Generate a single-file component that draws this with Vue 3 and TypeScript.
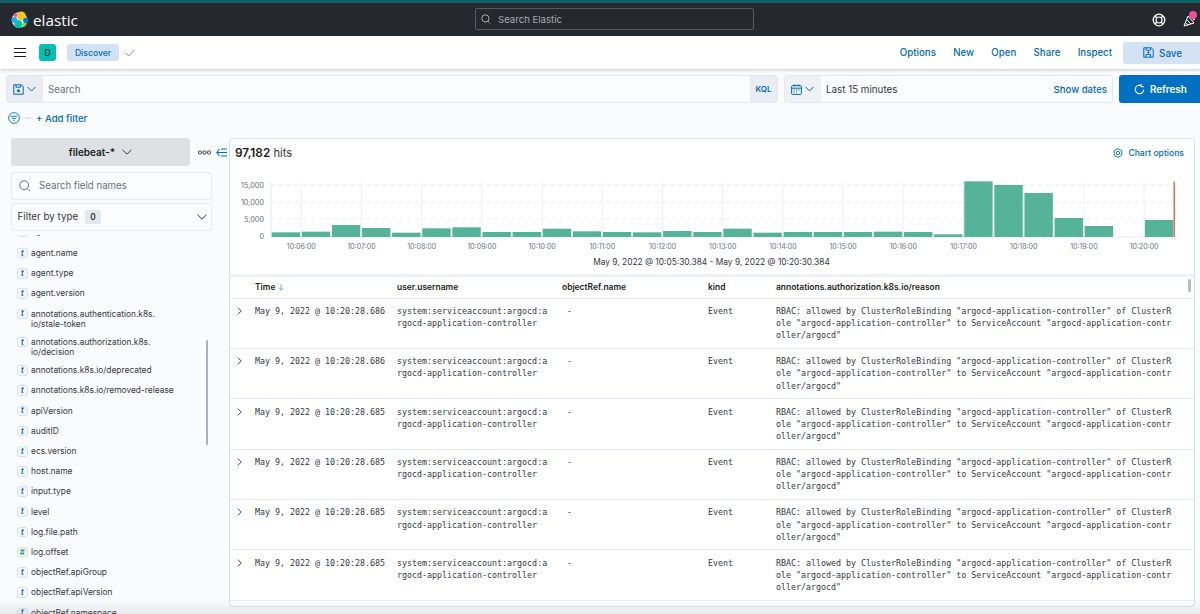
<script setup lang="ts">
const navLinks = ['Options', 'New', 'Open', 'Share', 'Inspect']

interface Field { name: string; kind: string }
const fields: Field[] = [
  { name: 'agent.name', kind: 't' },
  { name: 'agent.type', kind: 't' },
  { name: 'agent.version', kind: 't' },
  { name: 'annotations.authentication.k8s.\nio/stale-token', kind: 't' },
  { name: 'annotations.authorization.k8s.\nio/decision', kind: 't' },
  { name: 'annotations.k8s.io/deprecated', kind: 't' },
  { name: 'annotations.k8s.io/removed-release', kind: 't' },
  { name: 'apiVersion', kind: 't' },
  { name: 'auditID', kind: 't' },
  { name: 'ecs.version', kind: 't' },
  { name: 'host.name', kind: 't' },
  { name: 'input.type', kind: 't' },
  { name: 'level', kind: 't' },
  { name: 'log.file.path', kind: 't' },
  { name: 'log.offset', kind: '#' },
  { name: 'objectRef.apiGroup', kind: 't' },
  { name: 'objectRef.apiVersion', kind: 't' },
  { name: 'objectRef.namespace', kind: 't' }
]

const barTops = [277, 275, 255, 264, 278, 265, 262, 276, 276, 266, 274, 276, 277, 273, 276, 266, 278, 276, 276, 276, 275, 276, 283, 124, 135, 159, 234, 258, 291, 240]
const bars = barTops
  .map((z, i) => ({ x: 271.7 + i * 30.11, y: 140 + z / 3, h: (291 - z) / 3 }))
  .filter(b => b.h > 0)

const ticks = Array.from({ length: 15 }, (_, i) => ({
  x: 301.3 + i * 60.2,
  label: `10:${String(6 + i).padStart(2, '0')}:00`
}))
const yTicks = [
  { y: 185, label: '15,000' },
  { y: 202, label: '10,000' },
  { y: 219, label: '5,000' },
  { y: 236, label: '0' }
]

const reason = 'RBAC: allowed by ClusterRoleBinding "argocd-application-controller" of ClusterRole "argocd-application-controller" to ServiceAccount "argocd-application-controller/argocd"'
const times = ['686', '686', '685', '685', '685', '685']
const rows = times.map(ms => ({
  time: `May 9, 2022 @ 10:20:28.${ms}`,
  user: 'system:serviceaccount:argocd:argocd-application-controller',
  ref: '-',
  kind: 'Event',
  reason
}))
</script>

<template>
  <div class="page">
    <header class="globalbar">
      <div class="brand">
        <svg class="logo" width="18" height="18" viewBox="0 0 18 18">
          <circle cx="8.5" cy="9" r="7.8" fill="#eef1f4" />
          <circle cx="10.4" cy="4.8" r="4.4" fill="#fec514" />
          <circle cx="4.4" cy="4" r="1.9" fill="#f04e98" />
          <circle cx="3.4" cy="8.8" r="2.9" fill="#1ba9f5" />
          <circle cx="7.4" cy="13.2" r="3.9" fill="#00bfb3" />
          <circle cx="14.8" cy="9.4" r="2.7" fill="#0077cc" />
          <circle cx="13.4" cy="13.6" r="1.9" fill="#93c90e" />
        </svg>
        <span class="wordmark">elastic</span>
      </div>
      <div class="globalsearch">
        <svg width="10" height="10" viewBox="0 0 10 10" fill="none" stroke="#a8adb5" stroke-width="1"><circle cx="4.4" cy="4.4" r="3.6" /><path d="M7 7.2 9 9.4" /></svg>
        <span>Search Elastic</span>
      </div>
      <div class="globalicons">
        <svg width="14" height="14" viewBox="0 0 14 14" fill="none" stroke="#fff"><circle cx="7" cy="7" r="5.8" stroke-width="1.3" /><circle cx="7" cy="7" r="3" stroke-width="1.2" /><path d="M3 3l2 2M11 3 9 5M3 11l2-2M11 11 9 9" stroke-width="1.3" /></svg>
        <span class="cheer">
          <svg width="13" height="14" viewBox="0 0 13 14" fill="none" stroke="#fff" stroke-width="1"><path d="M1 13 5 3l6 7z" /><path d="M3.6 6.6 7.8 11M2.4 9.6 5 12.4" /><path d="M7 3.2 8.4 1M9.6 7 12 6" /></svg>
          <i class="dot"></i>
        </span>
      </div>
    </header>

    <nav class="appbar">
      <button class="burger" aria-label="Menu"><i></i><i></i><i></i></button>
      <span class="avatar">D</span>
      <span class="crumb">Discover</span>
      <svg class="check" width="10" height="8" viewBox="0 0 10 8" fill="none" stroke="#8b919b"><path d="M.8 4 3.8 7 9.4 1" /></svg>
      <div class="navlinks">
        <a v-for="l in navLinks" :key="l">{{ l }}</a>
        <button class="save">
          <svg width="11" height="11" viewBox="0 0 11 11" fill="none" stroke="#006bb4"><path d="M1 .8h7.4L10.2 2.6V10.2H.8V.8Z" /><path d="M3 .8v2.4h4.6V.8M3 10v-2.6h4.6V10" /><circle cx="5.4" cy="5.4" r=".7" fill="#006bb4" /></svg>
          Save
        </button>
      </div>
    </nav>

    <section class="querybar">
      <div class="querybox">
        <div class="seg left">
          <svg width="11" height="11" viewBox="0 0 11 11" fill="none" stroke="#006bb4"><path d="M1 .8h7.4L10.2 2.6V10.2H.8V.8Z" /><path d="M3 .8v2.4h4.6V.8" /><circle cx="5.4" cy="6.8" r="1.1" fill="#006bb4" /></svg>
          <svg width="9" height="6" viewBox="0 0 9 6" fill="none" stroke="#006bb4"><path d="M.6 1 4.5 5 8.4 1" /></svg>
        </div>
        <span class="placeholder">Search</span>
        <span class="kql">KQL</span>
      </div>
      <div class="datebox">
        <div class="seg date">
          <svg width="11" height="11" viewBox="0 0 11 11" fill="none" stroke="#006bb4"><rect x=".6" y="1.6" width="9.8" height="8.8" rx="1" /><path d="M.6 4.2h9.8M3.2.4v2M7.8.4v2M2.6 6h1M5 6h1M7.4 6h1M2.6 8h1M5 8h1" /></svg>
          <svg width="9" height="6" viewBox="0 0 9 6" fill="none" stroke="#006bb4"><path d="M.6 1 4.5 5 8.4 1" /></svg>
        </div>
        <span class="range">Last 15 minutes</span>
        <a class="showdates">Show dates</a>
      </div>
      <button class="refresh">
        <svg width="11" height="11" viewBox="0 0 11 11" fill="none" stroke="#fff" stroke-width="1.1"><path d="M9.8 5.6A4.3 4.3 0 1 1 7 1.4" /><path d="M7.2.2v2.6h2.6" /></svg>
        Refresh
      </button>
    </section>

    <div class="filterbar">
      <svg width="12" height="12" viewBox="0 0 13 13" fill="none" stroke="#0071c2"><circle cx="6.5" cy="6.5" r="5.8" /><path d="M3 4.6h7M4.4 6.8h4.2M5.6 9h1.8" /></svg>
      <i class="dash"></i>
      <a class="addfilter">+ Add filter</a>
    </div>

    <div class="content">
      <aside class="sidebar">
        <div class="indexrow">
          <button class="indexbtn">
            filebeat-*
            <svg width="10" height="6" viewBox="0 0 10 6" fill="none" stroke="#343741"><path d="M.6.8 5 5.2 9.4.8" /></svg>
          </button>
          <svg class="dots" width="13" height="5" viewBox="0 0 13 5" fill="#e8eaee" stroke="#4a4f59"><rect x=".5" y="1" width="3" height="3" rx=".8" /><rect x="5" y="1" width="3" height="3" rx=".8" /><rect x="9.5" y="1" width="3" height="3" rx=".8" /></svg>
          <svg class="collapse" width="11" height="9" viewBox="0 0 11 9" fill="none" stroke="#0071c2" stroke-width="1.1"><path d="M3.4 1 .8 4.5 3.4 8M1 4.5h10M5 1h6M5 8h6" /></svg>
        </div>
        <label class="fieldsearch">
          <svg width="12" height="12" viewBox="0 0 12 12" fill="none" stroke="#69707d"><circle cx="5.2" cy="5.2" r="4.4" /><path d="M8.4 8.6 11 11.4" /></svg>
          <span>Search field names</span>
        </label>
        <div class="typefilter">
          <span>Filter by type</span>
          <b class="zero">0</b>
          <svg width="10" height="6" viewBox="0 0 10 6" fill="none" stroke="#343741"><path d="M.6.8 5 5.2 9.4.8" /></svg>
        </div>
        <div class="fieldlist">
          <div class="field partial"><span class="badge">t</span><span class="fname">agent.id</span></div>
          <div v-for="f in fields" :key="f.name" class="field">
            <span class="badge" :class="{ num: f.kind === '#' }">{{ f.kind }}</span>
            <span class="fname">{{ f.name }}</span>
          </div>
          <i class="thumb"></i>
        </div>
      </aside>

      <main class="panel">
        <div class="charthead">
          <div class="hits"><b>97,182</b> hits</div>
          <a class="chartopts">
            <svg width="10" height="10" viewBox="0 0 10 10" fill="none" stroke="#0071c2" stroke-width=".9"><path d="M5 .6 8.8 2.8v4.4L5 9.4 1.2 7.2V2.8Z" /><circle cx="5" cy="5" r="1.7" /></svg>
            Chart options
          </a>
        </div>
        <svg class="chart" width="965" height="84" viewBox="230 172 965 84">
          <line v-for="t in ticks" :key="t.label" :x1="t.x" :x2="t.x" y1="182" y2="237" stroke="#eef0f5" />
          <line x1="271" x2="271" y1="182" y2="237" stroke="#e4e7ee" />
          <line v-for="y in yTicks.slice(0, 3)" :key="y.label" x1="271" x2="1174" :y1="y.y" :y2="y.y" stroke="#e9ebf0" stroke-dasharray="4 4" />
          <line x1="271" x2="1174" y1="237" y2="237" stroke="#e9ebf0" />
          <rect v-for="(b, i) in bars" :key="i" :x="b.x" :y="b.y" width="28.4" :height="b.h" fill="#54b399" />
          <line x1="1174.2" x2="1174.2" y1="181.5" y2="237" stroke="#e0403a" stroke-width="1.2" />
          <text v-for="y in yTicks" :key="y.label" x="264" :y="y.y + 3" text-anchor="end" class="axis ylab">{{ y.label }}</text>
          <text v-for="t in ticks" :key="t.label" :x="t.x" y="249.4" text-anchor="middle" class="axis">{{ t.label }}</text>
        </svg>
        <div class="caption">May 9, 2022 @ 10:05:30.384 - May 9, 2022 @ 10:20:30.384</div>

        <div class="docs">
          <div class="row headrow">
            <span></span>
            <span class="hcell">Time
              <svg width="6" height="7" viewBox="0 0 7 8" fill="none" stroke="#4a94d0" stroke-width=".9"><path d="M3.5 0v7M.8 4.4 3.5 7.2 6.2 4.4" /></svg>
            </span>
            <span class="hcell">user.username</span>
            <span class="hcell">objectRef.name</span>
            <span class="hcell">kind</span>
            <span class="hcell">annotations.authorization.k8s.io/reason</span>
          </div>
          <div v-for="(r, i) in rows" :key="i" class="row datarow">
            <span class="chev">
              <svg width="5" height="8" viewBox="0 0 5 8" fill="none" stroke="#343741" stroke-width=".9"><path d="M.7.6 4.3 4 .7 7.4" /></svg>
            </span>
            <span class="cell">{{ r.time }}</span>
            <span class="cell user">{{ r.user }}</span>
            <span class="cell ref">{{ r.ref }}</span>
            <span class="cell">{{ r.kind }}</span>
            <span class="cell reason">{{ r.reason }}</span>
          </div>
          <i class="docthumb"></i>
        </div>
      </main>
    </div>
    <i class="bottomfade"></i>
  </div>
</template>

<style>
html, body { margin: 0; background: #fafbfd; }
</style>

<style scoped>
.page {
  position: relative;
  width: 1200px;
  height: 614px;
  overflow: hidden;
  background: #fafbfd;
  font-family: Inter, "Liberation Sans", sans-serif;
  color: #343741;
  display: flex;
  flex-direction: column;
}
button { font-family: inherit; border: 0; padding: 0; }
.globalbar {
  height: 36px;
  box-sizing: border-box;
  flex: none;
  border-top: 3px solid #0e6568;
  background: #25282f;
  display: flex;
  align-items: center;
  position: relative;
}
.brand { display: flex; align-items: center; margin-left: 11px; width: 464px; }
.wordmark { color: #fff; font-size: 15.3px; margin-left: 4px; font-weight: 400; font-family: "Open Sans", sans-serif; }
.globalsearch {
  width: 279px;
  height: 22px;
  box-sizing: border-box;
  border: 1px solid #565a62;
  border-radius: 2px;
  display: flex;
  align-items: center;
  gap: 7px;
  padding-left: 5px;
  color: #a6abb3;
  font-size: 9.6px;
  margin-top: -1px;
}
.globalicons { margin-left: auto; display: flex; align-items: center; gap: 17px; padding-right: 4px; }
.cheer { position: relative; display: flex; }
.dot { position: absolute; width: 8px; height: 8px; border-radius: 50%; background: #f04e98; right: -1px; top: -2px; }

.appbar {
  height: 33px;
  flex: none;
  background: #fff;
  display: flex;
  align-items: center;
  box-shadow: 0 1px 3px rgba(60, 70, 90, .28);
  position: relative;
  z-index: 1;
}
.burger { width: 12px; margin-left: 14px; background: none; display: flex; flex-direction: column; gap: 2.4px; }
.burger i { display: block; height: 1.5px; background: #1a1c21; }
.avatar {
  width: 17px; height: 17px; margin-left: 13px; border-radius: 3px;
  background: #00bfb3; color: #1a1c21; font-size: 8.5px; font-weight: 500;
  display: flex; align-items: center; justify-content: center;
}
.crumb {
  width: 52px; height: 17px; margin-left: 11px; border-radius: 3px;
  background: #d0e2f5; color: #006bb4; font-size: 8.6px; font-weight: 500;
  display: flex; align-items: center; justify-content: center;
}
.check { margin-left: 6px; }
.navlinks { margin-left: auto; display: flex; align-items: center; gap: 17.3px; color: #006bb4; font-size: 9.7px; font-weight: 500; }
.save {
  width: 77px; height: 22px; margin-left: -6.3px; border-radius: 3px 0 0 3px;
  background: #d4e3f3; color: #006bb4; font-size: 9.9px; font-weight: 500;
  display: flex; align-items: center; justify-content: flex-start; gap: 5px; padding-left: 20px; box-sizing: border-box;
}

.querybar { display: flex; height: 28px; margin-top: 6px; padding-left: 6px; flex: none; }
.querybox, .datebox {
  display: flex; align-items: center; height: 28px; box-sizing: border-box;
  background: #fbfcfd; border: 1px solid #e3e7ee; border-radius: 3px; overflow: hidden;
}
.querybox { width: 772px; }
.datebox { width: 329px; margin-left: 6px; }
.seg { height: 100%; background: #e9edf3; display: flex; align-items: center; gap: 3px; box-sizing: border-box; }
.seg.left { width: 36px; padding-left: 6px; }
.seg.date { width: 36px; padding-left: 6px; background: #eef1f6; }
.placeholder { margin-left: 5px; font-size: 9.8px; color: #69707d; }
.kql {
  margin-left: auto; width: 27px; height: 100%; background: #e9edf3; color: #006bb4;
  font-size: 8px; font-weight: 600; display: flex; align-items: center; justify-content: center;
}
.range { margin-left: 5px; font-size: 9.8px; color: #343741; }
.showdates { margin-left: auto; margin-right: 5px; color: #006bb4; font-size: 9.6px; font-weight: 500; }
.refresh {
  width: 81px; height: 28px; margin-left: 6px; background: #0071c2; color: #fff;
  border-radius: 3px 0 0 3px; font-size: 9.8px; font-weight: 600;
  display: flex; align-items: center; gap: 5px; padding-left: 15px; box-sizing: border-box;
}

.filterbar { height: 35px; flex: none; display: flex; align-items: flex-start; padding: 9px 0 0 8px; box-sizing: border-box; }
.dash { width: 7px; height: 1.5px; background: #e4e7ec; margin: 5px 0 0 4px; }
.addfilter { margin-left: 5px; color: #006bb4; font-size: 9.6px; font-weight: 500; line-height: 14px; }

.content { display: flex; flex: none; height: 476px; }
.sidebar { width: 229px; flex: none; padding-left: 11px; box-sizing: border-box; }
.indexrow { display: flex; align-items: center; height: 28px; }
.indexbtn {
  width: 179px; height: 28px; border-radius: 3px; background: #dfe0e3; color: #1a1c21;
  font-size: 10px; font-weight: 600;
  display: flex; align-items: center; justify-content: center; gap: 7px;
}
.dots { margin-left: 8px; }
.collapse { margin-left: 5px; }
.fieldsearch, .typefilter {
  width: 201px; height: 27.5px; box-sizing: border-box; border: 1px solid #e6e9f0; border-radius: 3px;
  background: #fbfcfd; display: flex; align-items: center;
}
.fieldsearch { margin-top: 6px; padding-left: 7px; gap: 8px; color: #69707d; font-size: 9.7px; }
.typefilter { margin-top: 3.5px; padding: 0 2px 0 5.5px; font-size: 9.8px; color: #343741; }
.zero {
  width: 16px; height: 14px; margin-left: 7px; border-radius: 2px; background: #e3e8ef;
  font-size: 8.4px; font-weight: 600; display: flex; align-items: center; justify-content: center;
}
.typefilter svg { margin-left: auto; margin-right: 2px; }
.fieldlist { position: relative; height: 379px; margin-top: 4.5px; overflow: hidden; padding-left: 6px; }
.field { display: flex; align-items: flex-start; gap: 3.5px; padding: 4.6px 0 3.6px; min-height: 20.2px; box-sizing: border-box; }
.partial { margin-top: -13.6px; margin-bottom: 1.8px; }
.badge {
  width: 10.5px; height: 10.5px; flex: none; box-sizing: border-box; border: 1px solid #d3e3f3; border-radius: 2.5px;
  background: #f0f6fb; color: #20568c; font-size: 7.5px; font-style: italic; font-weight: 600;
  display: flex; align-items: center; justify-content: center;
}
.badge.num { background: #eaf5f1; border-color: #cfe8df; color: #3e8a72; }
.fname { font-size: 8.4px; line-height: 10.1px; color: #343741; white-space: pre; }
.thumb { position: absolute; left: 194.7px; top: 105px; width: 2.4px; height: 105px; background: #abb1bb; border-radius: 2px; }

.panel {
  width: 966px; height: 469px; flex: none; box-sizing: border-box; overflow: hidden;
  background: #fff; border: 1px solid #d9dfe9; border-radius: 4px; position: relative;
}
.charthead { height: 28px; margin-bottom: 5px; display: flex; align-items: center; justify-content: space-between; padding: 0 10px 0 5px; }
.hits { font-size: 11.2px; color: #343741; }
.hits b { color: #1a1c21; font-weight: 600; font-size: 11.8px; }
.chartopts { display: flex; align-items: center; gap: 5px; color: #006bb4; font-size: 8.6px; font-weight: 500; }
.chart { display: block; }
.axis { font-size: 7px; fill: #69707d; font-family: Inter, sans-serif; }
.ylab { font-size: 7.3px; }
.caption { height: 12px; line-height: 12px; margin-bottom: 6px; text-align: center; font-size: 8.35px; color: #343741; padding-right: 1px; }
.docs { position: relative; border-top: 3px solid #eef1f5; }
.row {
  display: grid;
  grid-template-columns: 25px 142px 165px 146px 68px 398px;
  box-sizing: border-box;
  border-bottom: 1.5px solid #e6e9f2;
}
.headrow { height: 21.5px; align-items: center; }
.hcell { font-size: 8.45px; font-weight: 600; color: #1a1c21; display: flex; align-items: center; gap: 2.5px; }
.datarow { height: 50.4px; padding-top: 6.4px; }
.cell {
  font-family: "DejaVu Sans Mono", "Liberation Mono", monospace;
  font-size: 8.32px; line-height: 12.2px; color: #343741; word-break: break-all;
}
.user { padding-right: 13px; }
.ref { padding-left: 5px; }
.chev { display: flex; align-items: flex-start; padding: 2px 0 0 7px; }
.docthumb { position: absolute; left: 958px; top: 2px; width: 3px; height: 13px; background: #b5bac3; border-radius: 2px; }
.bottomfade {
  position: absolute; left: 0; right: 0; bottom: 0; height: 14px;
  background: linear-gradient(to bottom, rgba(120, 125, 135, 0), rgba(120, 125, 135, .14));
  pointer-events: none;
}
</style>
